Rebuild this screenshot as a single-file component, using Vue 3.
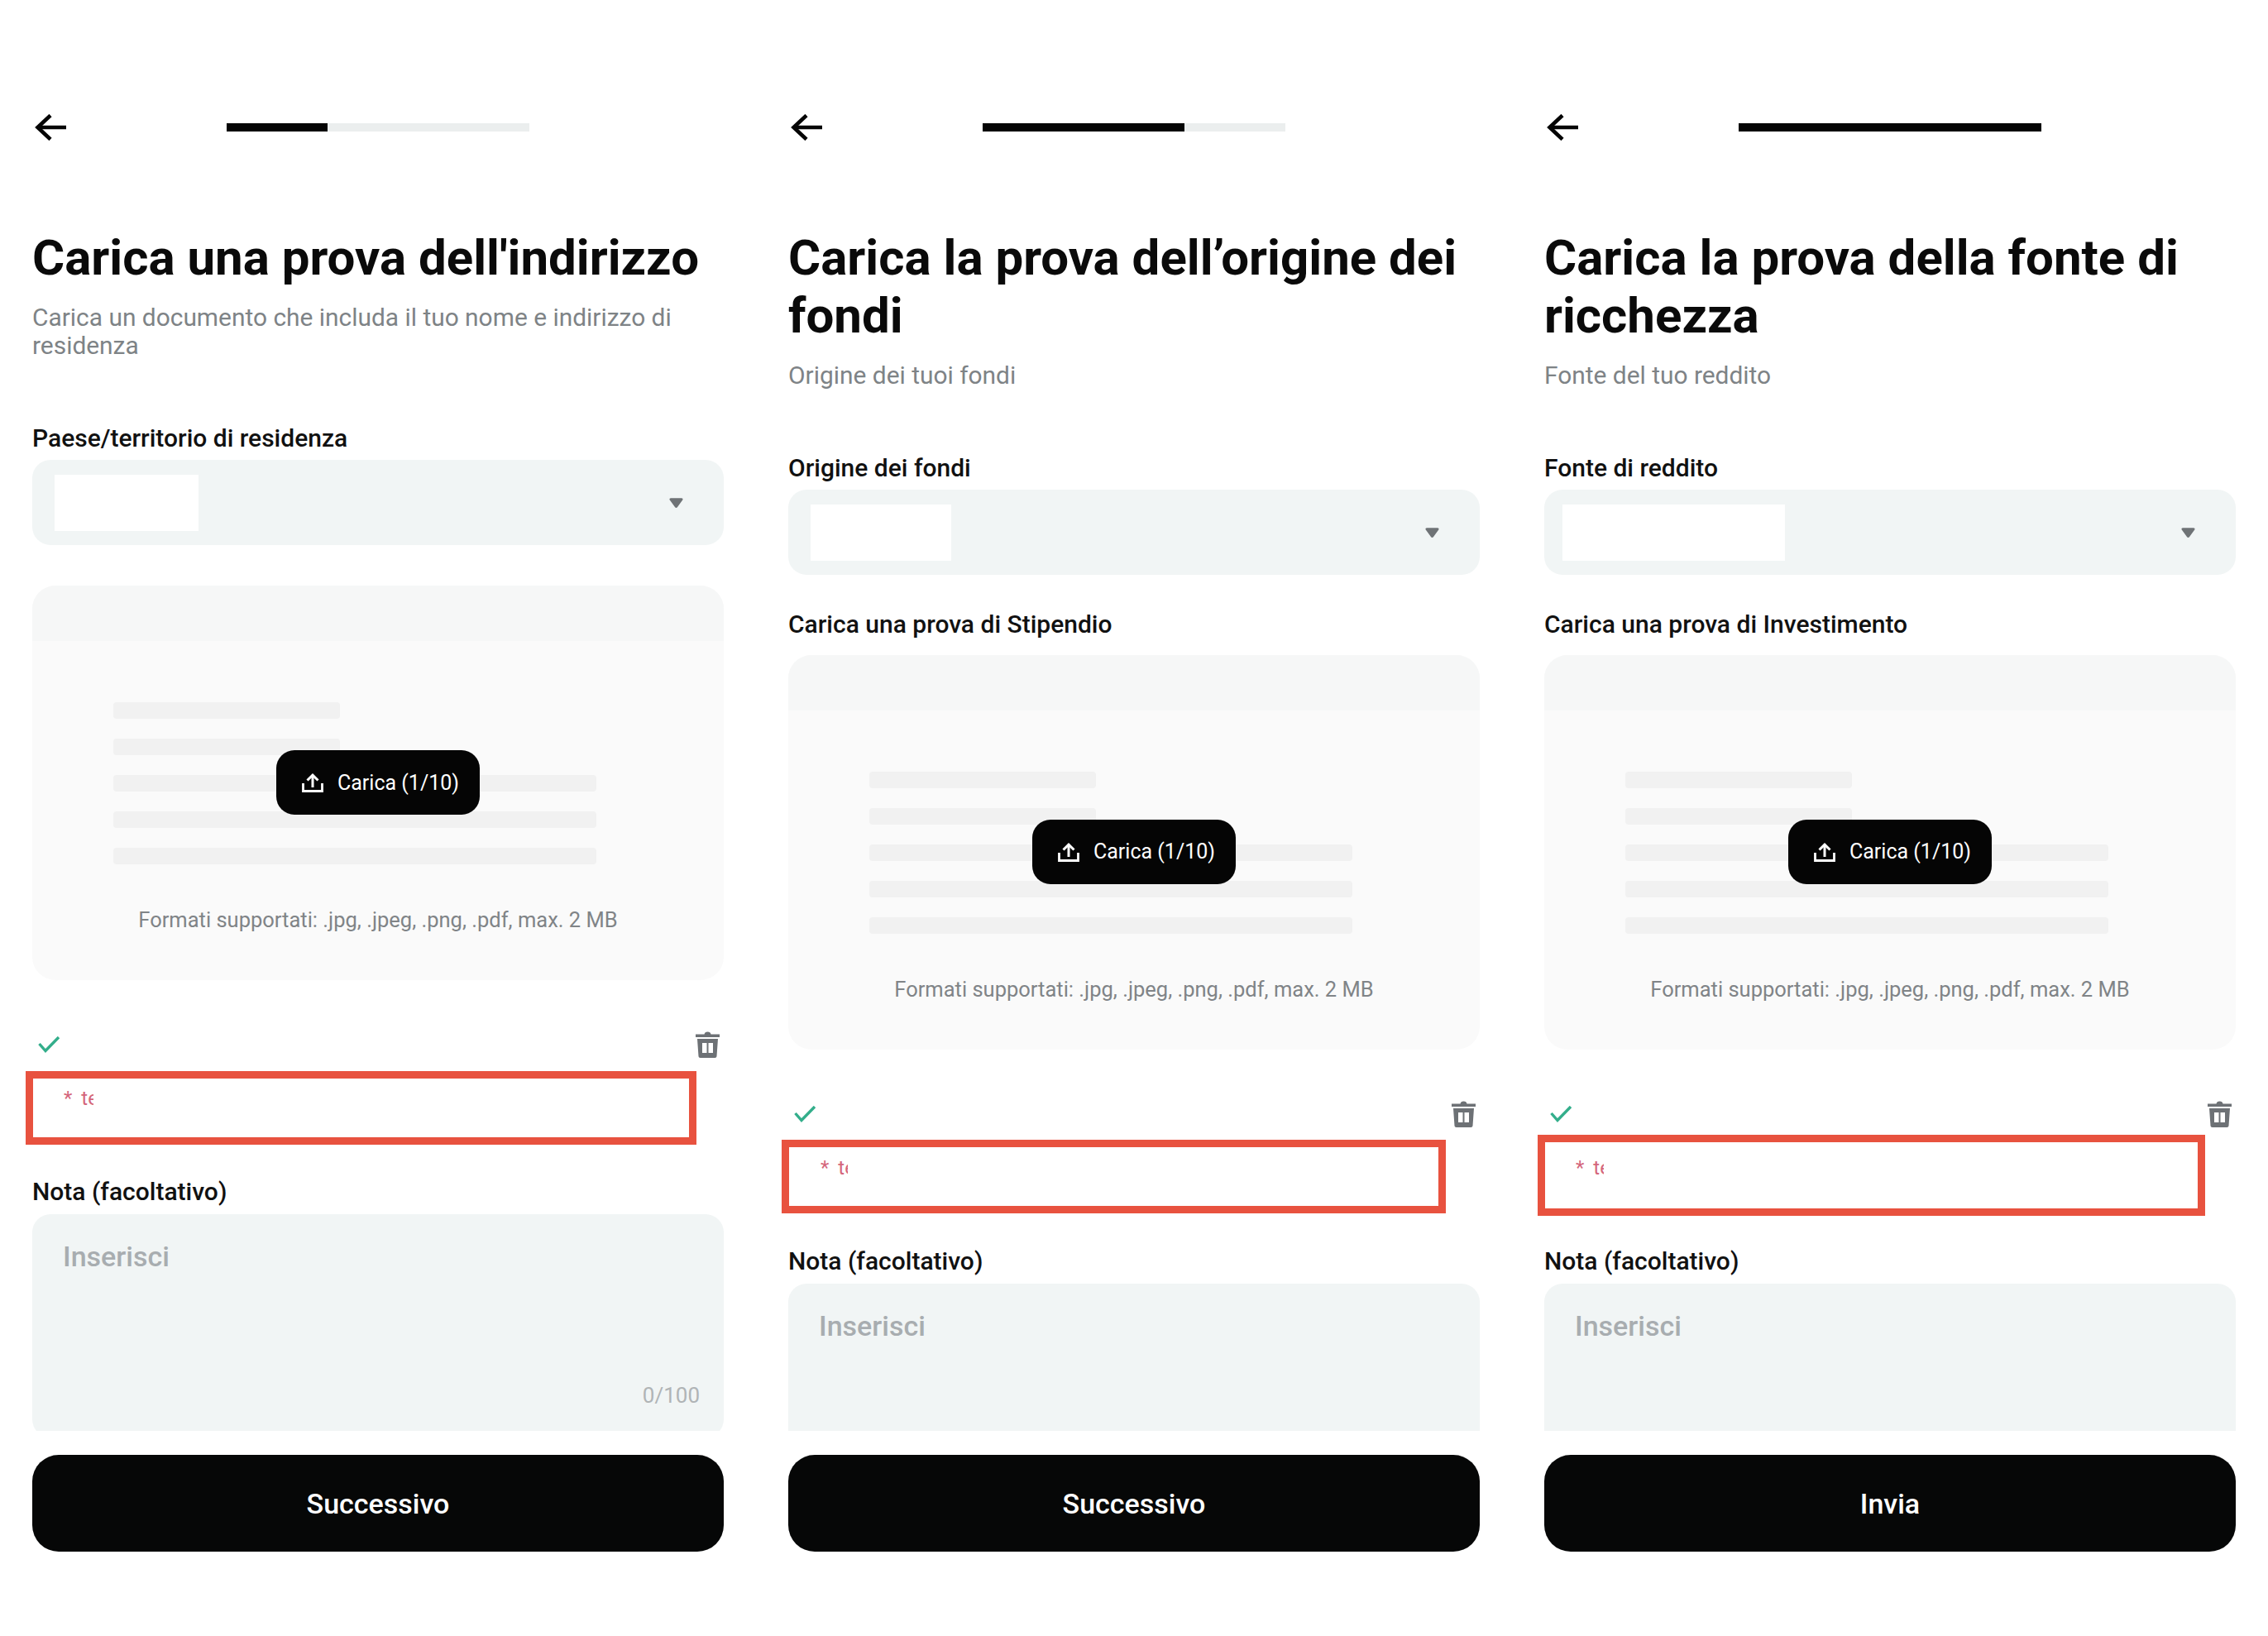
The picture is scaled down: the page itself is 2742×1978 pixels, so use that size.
<script setup>
const screens = [
  { id: 1, title: "Carica una prova dell'indirizzo", sub: 'Carica un documento che includa il tuo nome e indirizzo di residenza', field: 'Paese/territorio di residenza', mask: 174, proof: '', progress: 33.33, action: 'Successivo' },
  { id: 2, title: 'Carica la prova dell’origine dei fondi', sub: 'Origine dei tuoi fondi', field: 'Origine dei fondi', mask: 170, proof: 'Carica una prova di Stipendio', progress: 66.6, action: 'Successivo' },
  { id: 3, title: 'Carica la prova della fonte di ricchezza', sub: 'Fonte del tuo reddito', field: 'Fonte di reddito', mask: 269, proof: 'Carica una prova di Investimento', progress: 100, action: 'Invia' },
]
const lines = ['short', 'short', 'long', 'long', 'long']
</script>

<template>
  <div class="page">
    <section v-for="s in screens" :key="s.id" class="screen">
      <div class="scroll">
        <header class="topbar">
          <svg class="back" viewBox="0 0 38 32" fill="none" stroke="#050505" stroke-width="4.6">
            <path d="M38 16H4" />
            <path d="M19 1.5 3.5 16 19 30.500" />
          </svg>
          <div class="track"><div class="fill" :style="{ width: s.progress + '%' }"></div></div>
        </header>
        <h1 class="title">{{ s.title }}</h1>
        <p class="sub">{{ s.sub }}</p>

        <label class="label field-label">{{ s.field }}</label>
        <div class="select" :class="'select-' + s.id">
          <div class="mask" :style="{ width: s.mask + 'px' }"></div>
          <svg class="caret" viewBox="0 0 16 13"><path d="M2 1h12c1.500 0 2 1 1.300 2.200L9.300 11.500c-.7 1-1.900 1-2.600 0L.7 3.200C0 2 .5 1 2 1z" fill="#6f7376" /></svg>
        </div>

        <label v-if="s.proof" class="label proof-label">{{ s.proof }}</label>
        <div class="card" :class="{ 'card-first': !s.proof }">
          <div class="band"></div>
          <div class="lines">
            <div v-for="(l, i) in lines" :key="i" class="line" :class="l"></div>
          </div>
          <p class="formats">Formati supportati: .jpg, .jpeg, .png, .pdf, max. 2 MB</p>
          <button class="upload">
            <svg class="up-icon" viewBox="0 0 26 23" fill="none" stroke="#fff" stroke-width="3">
              <path d="M1.500 12v9.500h23V12" stroke-width="2.800" />
              <path d="M13 17V2.500" />
              <path d="M6.500 8.500 13 2.200l6.500 6.300" />
            </svg>
            <span>Carica (1/10)</span>
          </button>
        </div>

        <div class="file-row">
          <svg class="check" viewBox="0 0 26 20" fill="none" stroke="#33ae8b" stroke-width="3.400">
            <path d="M1.500 9 9 17.500 25 1" />
          </svg>
          <svg class="trash" viewBox="0 0 29 32">
            <path fill="#6d7175" d="M10.500 3.500C11 1.500 12 .5 14.500.5s3.500 1 4 3H29v3.500H0V3.500zM2 9h25l-1.500 21c-.1 1.300-1 2-2.200 2H5.700c-1.200 0-2.100-.7-2.200-2z" />
            <rect x="8" y="14" width="5.500" height="12" fill="#fff" />
            <rect x="15.500" y="14" width="5.500" height="12" fill="#fff" />
          </svg>
          <div class="mark" :class="'mark-' + s.id">
            <span class="hint">* test</span>
          </div>
        </div>

        <label class="label note-label">Nota (facoltativo)</label>
        <div class="note">
          <span class="placeholder">Inserisci</span>
          <span class="count">0/100</span>
        </div>
      </div>
      <button class="primary">{{ s.action }}</button>
    </section>
  </div>
</template>

<style scoped>
.page {
  display: flex;
  gap: 78px;
  padding-left: 39px;
  width: 2742px;
  height: 1978px;
  box-sizing: border-box;
  background: #fff;
  font-family: Roboto, "Liberation Sans", sans-serif;
  overflow: hidden;
}
.screen {
  width: 836px;
  height: 1978px;
  box-sizing: border-box;
  padding-bottom: 102px;
  display: flex;
  flex-direction: column;
}
.scroll {
  flex: 1;
  min-height: 0;
  padding-top: 138px;
  clip-path: inset(0 -20px 0 -20px);
}
.topbar {
  display: grid;
  grid-template-columns: 1fr 366px 1fr;
  align-items: center;
  height: 32px;
}
.back {
  width: 38px;
  height: 32px;
  margin-left: 3px;
}
.track {
  grid-column: 2;
  height: 10px;
  background: #ebeeee;
}
.fill {
  height: 100%;
  background: #050505;
}
.title {
  margin: 106.500px 0 0;
  font-size: 60px;
  line-height: 70.500px;
  font-weight: 700;
  color: #0a0a0a;
}
.sub {
  margin: 19.500px 0 0;
  font-size: 29.900px;
  line-height: 34.500px;
  font-weight: 400;
  color: #7e8386;
}
.label {
  display: block;
  font-size: 30px;
  line-height: 36px;
  font-weight: 500;
  color: #111;
}
.field-label {
  margin-top: 76.500px;
}
.select {
  margin-top: 8px;
  height: 103px;
  border-radius: 22px;
  background: #f1f5f5;
  display: flex;
  align-items: center;
  justify-content: space-between;
  padding: 0 49px 0 27px;
}
.select-3 {
  padding-left: 22px;
}
.mask {
  height: 68px;
  background: #fff;
}
.caret {
  width: 17px;
  height: 14px;
}
.proof-label {
  margin-top: 41.500px;
}
.card {
  position: relative;
  margin-top: 19px;
  height: 477px;
  border-radius: 28px;
  background: #fafafa;
  overflow: hidden;
}
.card-first {
  margin-top: 49px;
}
.band {
  height: 67px;
  background: #f6f7f7;
}
.lines {
  margin: 74px 0 0 98px;
  display: flex;
  flex-direction: column;
  gap: 24px;
}
.line {
  height: 20px;
  border-radius: 4px;
  background: #f1f1f1;
}
.short {
  width: 274px;
}
.long {
  width: 584px;
}
.formats {
  margin: 51px 0 0;
  text-align: center;
  font-size: 25.500px;
  line-height: 32px;
  color: #808487;
}
.upload {
  position: absolute;
  left: 295px;
  top: 199px;
  width: 246px;
  height: 78px;
  border: 0;
  border-radius: 22px;
  background: #050505;
  color: #fff;
  display: flex;
  align-items: center;
  gap: 17px;
  padding: 0 0 0 31px;
  font-family: inherit;
  font-size: 25px;
  font-weight: 400;
}
.up-icon {
  width: 26px;
  height: 23px;
  margin-top: 1px;
}
.file-row {
  position: relative;
  margin-top: 62px;
  height: 32px;
  display: flex;
  align-items: center;
  justify-content: space-between;
  padding: 0 5px 0 7px;
}
.check {
  width: 26px;
  height: 20px;
}
.trash {
  width: 29px;
  height: 32px;
}
.mark {
  position: absolute;
  box-sizing: border-box;
  border: 9px solid #e8523f;
  background: #fff;
}
.mark-1 {
  left: -8px;
  top: 48px;
  width: 811px;
  height: 89px;
  padding: 9px 0 0 37px;
}
.mark-2 {
  left: -8px;
  top: 47px;
  width: 803px;
  height: 89px;
  padding: 10px 0 0 38px;
}
.mark-3 {
  left: -8px;
  top: 41px;
  width: 807px;
  height: 98px;
  padding: 16px 0 0 37px;
}
.hint {
  display: block;
  overflow: hidden;
  white-space: nowrap;
  font-size: 24px;
  line-height: 30px;
  word-spacing: 5px;
  color: #d4667c;
  width: 36px;
}
.mark-2 .hint {
  width: 33px;
}
.mark-3 .hint {
  width: 34px;
}
.note-label {
  margin-top: 144px;
}
.note {
  position: relative;
  margin-top: 9px;
  height: 270px;
  border-radius: 22px;
  background: #f1f5f5;
  padding: 31px 0 0 37px;
  box-sizing: border-box;
}
.placeholder {
  display: block;
  font-size: 34px;
  line-height: 40px;
  font-weight: 500;
  color: #a8adb0;
}
.count {
  position: absolute;
  right: 29px;
  bottom: 35px;
  font-size: 26px;
  line-height: 32px;
  color: #b0b4b6;
}
.primary {
  flex: none;
  margin-top: 29px;
  height: 117px;
  border: 0;
  border-radius: 32px;
  background: #060707;
  color: #fff;
  font-family: inherit;
  font-size: 34px;
  font-weight: 500;
}
</style>
